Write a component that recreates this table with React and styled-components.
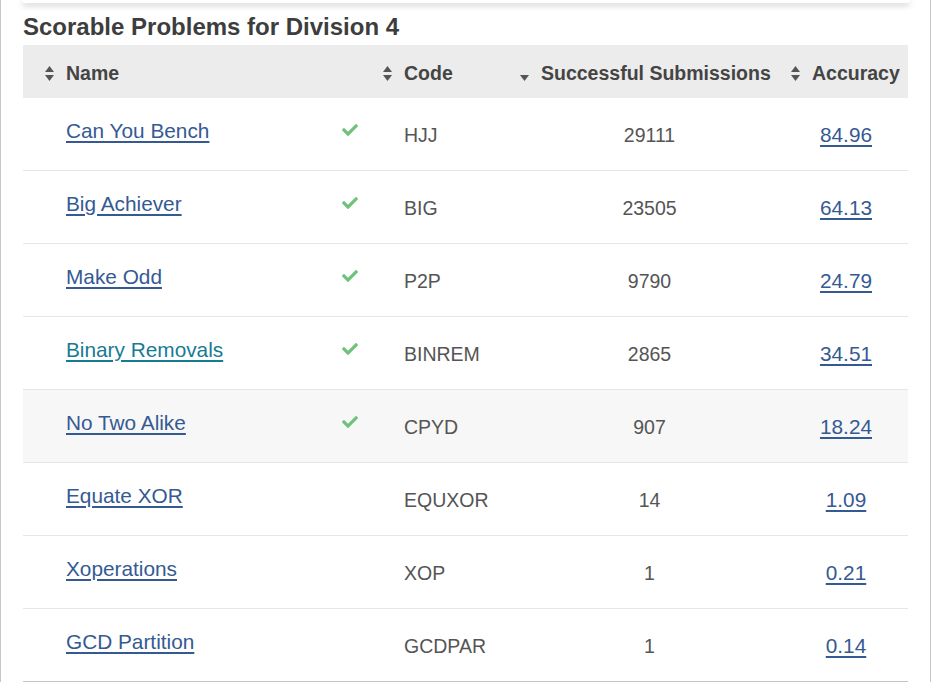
import React from 'react';
import styled, { createGlobalStyle } from 'styled-components';
import { FaCheck } from 'react-icons/fa';

const problems = [
  { name: 'Can You Bench', solved: true, code: 'HJJ', subs: 29111, acc: '84.96' },
  { name: 'Big Achiever', solved: true, code: 'BIG', subs: 23505, acc: '64.13' },
  { name: 'Make Odd', solved: true, code: 'P2P', subs: 9790, acc: '24.79' },
  { name: 'Binary Removals', solved: true, code: 'BINREM', subs: 2865, acc: '34.51', visited: true },
  { name: 'No Two Alike', solved: true, code: 'CPYD', subs: 907, acc: '18.24', hover: true },
  { name: 'Equate XOR', solved: false, code: 'EQUXOR', subs: 14, acc: '1.09' },
  { name: 'Xoperations', solved: false, code: 'XOP', subs: 1, acc: '0.21' },
  { name: 'GCD Partition', solved: false, code: 'GCDPAR', subs: 1, acc: '0.14' },
];

function SortBoth() {
  return (
    <svg width="9" height="15" viewBox="0 0 9 15">
      <path d="M4.5 0 L9 6 L0 6 Z" fill="#555" />
      <path d="M0 9 L9 9 L4.5 15 Z" fill="#555" />
    </svg>
  );
}

function SortDown() {
  return (
    <DownIcon width="9" height="6" viewBox="0 0 9 6">
      <path d="M0 0 L9 0 L4.5 6 Z" fill="#555" />
    </DownIcon>
  );
}

function App() {
  return (
    <>
      <GlobalStyle />
      <Page>
        <TopCard />
        <Title>Scorable Problems for Division 4</Title>
        <Table>
          <HeadRow>
            <HeadCell pad="22px">
              <SortBoth />
              Name
            </HeadCell>
            <HeadCell pad="22px">
              <SortBoth />
              Code
            </HeadCell>
            <HeadCell pad="10px">
              <SortDown />
              Successful Submissions
            </HeadCell>
            <HeadCell pad="2px">
              <SortBoth />
              Accuracy
            </HeadCell>
          </HeadRow>
          {problems.map((p, i) => (
            <Row key={p.code} hover={p.hover} last={i === problems.length - 1}>
              <NameCell>
                <NameLink href="#" visited={p.visited}>
                  {p.name}
                </NameLink>
                {p.solved && <Check />}
              </NameCell>
              <Cell>{p.code}</Cell>
              <Cell center>{p.subs}</Cell>
              <Cell center right="5px">
                <AccLink href="#">{p.acc}</AccLink>
              </Cell>
            </Row>
          ))}
        </Table>
      </Page>
    </>
  );
}

export default App;

const GlobalStyle = createGlobalStyle`
  body {
    margin: 0;
    background: #fff;
    font-family: "Liberation Sans", Arial, sans-serif;
  }
`;

const Page = styled.div`
  width: 931px;
  height: 682px;
  overflow: hidden;
  border-left: 1px solid #c8c8c8;
  border-right: 1px solid #c8c8c8;
  padding-left: 22px;
  box-sizing: border-box;
`;

const TopCard = styled.div`
  width: 888px;
  height: 3px;
  margin-left: -1px;
  background: #fff;
  border-radius: 0 0 4px 4px;
  box-shadow: 0 2px 6px rgba(0, 0, 0, 0.28);
`;

const Title = styled.h2`
  margin: 10px 0 4px 0;
  font-size: 24px;
  line-height: 28px;
  font-weight: bold;
  color: #3d3d3d;
`;

const Table = styled.div`
  width: 885px;
`;

const columns = '338px 149px 279px 119px';

const HeadRow = styled.div`
  display: grid;
  grid-template-columns: ${columns};
  height: 53px;
  background: #ececec;
`;

const HeadCell = styled.div`
  display: flex;
  align-items: center;
  gap: 12px;
  padding: 4px 0 0 ${(p) => p.pad};
  font-size: 19.5px;
  font-weight: bold;
  color: #444;
  white-space: nowrap;
`;

const DownIcon = styled.svg`
  margin-top: 8px;
`;

const Row = styled.div`
  display: grid;
  grid-template-columns: ${columns};
  height: 73px;
  box-sizing: border-box;
  background: ${(p) => (p.hover ? '#f7f7f7' : '#fff')};
  border-bottom: 1px solid ${(p) => (p.last ? '#c4c4c4' : '#e6e6e6')};
`;

const Cell = styled.div`
  display: flex;
  align-items: center;
  justify-content: ${(p) => (p.center ? 'center' : 'flex-start')};
  padding: 2px ${(p) => p.right || '0'} 0 ${(p) => (p.center ? '0' : '43px')};
  font-size: 19.5px;
  color: #555;
`;

const NameCell = styled.div`
  display: flex;
  align-items: center;
  justify-content: space-between;
  padding: 0 3px 6px 43px;
`;

const NameLink = styled.a`
  font-size: 20.8px;
  color: ${(p) => (p.visited ? '#167b93' : '#355a93')};
  text-decoration: underline;
  text-underline-offset: 3px;
`;

const AccLink = styled.a`
  font-size: 20.8px;
  color: #355a93;
  text-decoration: underline;
  text-underline-offset: 3px;
`;

const Check = styled(FaCheck)`
  width: 16px;
  height: 16px;
  color: #6fc279;
  margin-bottom: 2px;
`;
